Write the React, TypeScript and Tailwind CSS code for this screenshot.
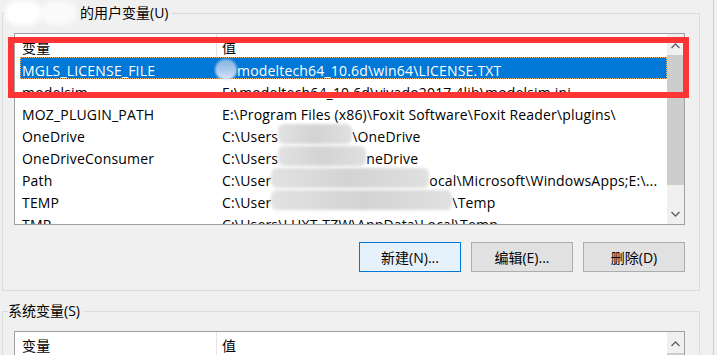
import React from 'react';

type Row = { name: string; value: React.ReactNode; selected?: boolean };

// soft grey smear used to hide personal bits of a path
const Smear = ({ w }: { w: string }) => (
  <span className={`inline-block align-top h-[20px] -mt-[5px] mb-[1px] rounded-[6px] bg-linear-to-r from-[#e2e2e2] via-[#d3d3d3] to-[#e0e0e0] blur-[1.5px] ${w}`} />
);

const Chevron = ({ up }: { up?: boolean }) => (
  <svg width="9" height="6" viewBox="0 0 9 6" className="block">
    <polyline
      points={up ? '0.5,5 4.5,1 8.5,5' : '0.5,1 4.5,5 8.5,1'}
      fill="none"
      stroke="#606060"
      strokeWidth="1.3"
    />
  </svg>
);

const userRows: Row[] = [
  {
    name: 'MGLS_LICENSE_FILE',
    selected: true,
    value: (
      <>
        <span className="inline-block align-top w-[22px] h-[21px] -mt-[4px] -ml-[7px] rounded-full bg-linear-to-b from-[#86b2e4] via-[#a9c8ec] to-[#dbe8f6] blur-[1px]" />
        {'modeltech64_10.6d\\win64\\LICENSE.TXT'}
      </>
    ),
  },
  { name: 'modelsim', value: 'E:\\modeltech64_10.6d\\vivado2017.4lib\\modelsim.ini' },
  { name: 'MOZ_PLUGIN_PATH', value: 'E:\\Program Files (x86)\\Foxit Software\\Foxit Reader\\plugins\\' },
  {
    name: 'OneDrive',
    value: (
      <>
        {'C:\\Users'}
        <Smear w="w-[74px]" />
        {'\\OneDrive'}
      </>
    ),
  },
  {
    name: 'OneDriveConsumer',
    value: (
      <>
        {'C:\\Users'}
        <Smear w="w-[88px]" />
        {'neDrive'}
      </>
    ),
  },
  {
    name: 'Path',
    value: (
      <>
        {'C:\\User'}
        <Smear w="w-[158px]" />
        {'ocal\\Microsoft\\WindowsApps;E:\\...'}
      </>
    ),
  },
  {
    name: 'TEMP',
    value: (
      <>
        {'C:\\User'}
        <Smear w="w-[181px]" />
        {'\\Temp'}
      </>
    ),
  },
  { name: 'TMP', value: 'C:\\Users\\LHXT-TZW\\AppData\\Local\\Temp' },
];

const systemRows: Row[] = [
  { name: 'ComSpec', value: 'C:\\WINDOWS\\system32\\cmd.exe' },
];

const ListBox = ({ rows, h, thumb }: { rows: Row[]; h: string; thumb: string }) => (
  <div className={`flex w-[671px] border border-[#a0a0a0] bg-white overflow-hidden ${h}`}>
    <div className="flex-1 min-w-0 overflow-hidden tracking-[0.18px]">
      <div className="flex h-[23px] leading-[16px]">
        <div className="w-[201px] shrink-0 pl-[7px] pt-[6px]">变量</div>
        <div className="w-px bg-[#e5e5e5]" />
        <div className="pl-[5px] pt-[6px]">值</div>
      </div>
      {rows.map((r) => (
        <div key={r.name} className="flex h-[22px] pl-[5px]">
          <div
            className={`flex flex-1 whitespace-nowrap ${
              r.selected ? 'bg-[#0078d7] text-white outline-1 outline-dotted outline-[#f0b46a] -outline-offset-1' : ''
            }`}
          >
            <div className="w-[196px] shrink-0 pl-[2px] pt-[6px] leading-[16px]">{r.name}</div>
            <div className="pl-[6px] pt-[6px] leading-[16px]">{r.value}</div>
          </div>
        </div>
      ))}
    </div>
    <div className="flex w-[17px] shrink-0 flex-col bg-[#f0f0f0]">
      <div className="flex h-[21px] shrink-0 items-center justify-center pt-[2px]">
        <Chevron up />
      </div>
      <div className={`shrink-0 bg-[#cdcdcd] ${thumb}`} />
      <div className="flex-1" />
      <div className="flex h-[21px] shrink-0 items-center justify-center">
        <Chevron />
      </div>
    </div>
  </div>
);

const Button = ({ label, primary }: { label: string; primary?: boolean }) => (
  <div
    className={`flex h-[30px] w-[102px] items-center justify-center border ${
      primary ? 'bg-[#e5f1fb] border-[#0078d7]' : 'bg-[#e1e1e1] border-[#adadad]'
    }`}
  >
    {label}
  </div>
);

export default function App() {
  return (
    <div className="relative flex h-[355px] w-[717px] overflow-hidden bg-[#f0f0f0] text-[14px] text-black font-['Open_Sans','Noto_Sans_CJK_SC',sans-serif]">
      <div className="w-[713px] shrink-0">
        {/* user variables */}
        <fieldset className="ml-[2px] mt-[3px] h-[288px] w-[698px] border border-[#dcdcdc]">
          <legend className="ml-[2px] pr-[3px]">
            <div className="flex h-[20px] items-center leading-[20px]">
              <span className="flex h-[24px] w-[72px] blur-[2.5px]">
                <span className="h-full flex-1 rounded-full bg-white" />
                <span className="h-full flex-1 rounded-full bg-[#fafafa]" />
              </span>
              <span className="ml-[3px]">的用户变量(U)</span>
            </div>
          </legend>
          <div className="pl-[11px] pr-[14px] pt-[10px]">
            <ListBox rows={userRows} h="h-[192px]" thumb="h-[130px]" />
            <div className="mt-[17px] flex justify-end gap-[10px]">
              <Button label="新建(N)..." primary />
              <Button label="编辑(E)..." />
              <Button label="删除(D)" />
            </div>
          </div>
        </fieldset>

        {/* system variables */}
        <fieldset className="ml-[2px] mt-[10px] h-[200px] w-[698px] border border-[#dcdcdc]">
          <legend className="ml-[5px] pr-[3px] leading-[20px]">系统变量(S)</legend>
          <div className="pl-[11px] pr-[14px] pt-[10px]">
            <ListBox rows={systemRows} h="h-[192px]" thumb="h-[60px]" />
          </div>
        </fieldset>
      </div>
      <div className="w-px shrink-0 bg-[#cfcfcf]" />

      {/* red annotation box */}
      <div className="pointer-events-none absolute left-[8px] top-[37px] h-[61px] w-[681px] border-[6px] border-[#ff3535]" />
    </div>
  );
}
